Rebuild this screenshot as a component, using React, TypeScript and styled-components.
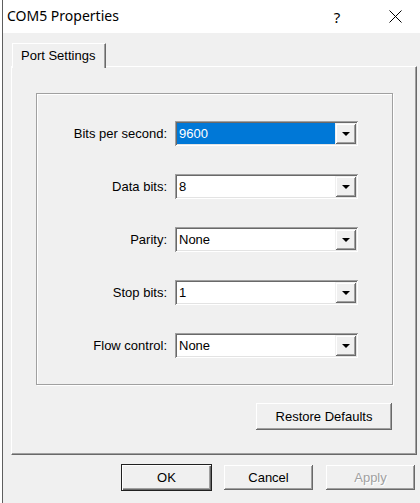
import React from "react";
import styled, { createGlobalStyle } from "styled-components";

const Global = createGlobalStyle`
  html, body { margin: 0; padding: 0; background: #ffffff; }
  body {
    width: 420px;
    height: 503px;
    overflow: hidden;
    font-family: "Liberation Sans", Arial, sans-serif;
    font-size: 13px;
    color: #000;
  }
  #root { width: 420px; height: 503px; }
`;

const Window = styled.div`
  margin-left: 2px;
  width: 417px;
  height: 503px;
  border-left: 1px solid #5e5e5e;
  display: flex;
  flex-direction: column;
  background: #f0f0f0;
  overflow: hidden;
`;

const TitleBar = styled.div`
  height: 33px;
  flex: none;
  background: #ffffff;
  display: flex;
  align-items: center;
  padding-left: 4px;
`;

const Title = styled.div`
  flex: 1;
  font-family: "Noto Sans", "Open Sans", sans-serif;
  font-size: 14px;
  color: #000;
  padding-bottom: 2px;
`;

const CaptionButton = styled.div<{ $w: number }>`
  width: ${(p) => p.$w}px;
  height: 33px;
  display: flex;
  align-items: center;
  justify-content: center;
  font-family: "Noto Sans", sans-serif;
  font-size: 15px;
  color: #000;
`;

const Body = styled.div`
  flex: 1;
  display: flex;
  flex-direction: column;
  padding: 10px 3px 0 8px;
`;

const TabStrip = styled.div`
  display: flex;
  height: 24px;
  position: relative;
  z-index: 1;
  margin-bottom: -1px;
`;

const Tab = styled.div`
  margin-left: 1px;
  height: 25px;
  box-sizing: border-box;
  padding: 4px 10px 0 8px;
  background: #f0f0f0;
  border-top: 1px solid #ffffff;
  border-left: 1px solid #ffffff;
  border-right: 1px solid #696969;
  box-shadow: inset -1px 0 #a0a0a0;
  font-size: 13px;
  white-space: nowrap;
`;

const Panel = styled.div`
  display: flex;
  flex-direction: column;
  border-top: 1px solid #ffffff;
  border-left: 1px solid #ffffff;
  border-right: 1px solid #696969;
  border-bottom: 1px solid #696969;
  box-shadow: inset -1px -1px #a0a0a0;
  padding: 26px 23px 23px 24px;
`;

const GroupBox = styled.div`
  height: 292px;
  box-sizing: border-box;
  border: 1px solid #a0a0a0;
  box-shadow: inset 1px 1px #ffffff, 1px 1px #ffffff;
  padding: 27px 34px 0 0;
  display: flex;
  flex-direction: column;
  gap: 28px;
`;

const Row = styled.div`
  display: grid;
  grid-template-columns: 130px 183px;
  column-gap: 8px;
  align-items: center;
  height: 25px;
`;

const Label = styled.div`
  text-align: right;
  white-space: nowrap;
`;

const Combo = styled.div`
  height: 25px;
  box-sizing: border-box;
  padding: 2px;
  display: flex;
  background: #ffffff;
  box-shadow: inset 1px 1px #a0a0a0, inset -1px -1px #ffffff,
    inset 2px 2px #696969, inset -2px -2px #e3e3e3;
`;

const Field = styled.div<{ $selected?: boolean }>`
  flex: 1;
  display: flex;
  align-items: center;
  padding-left: 2px;
  background: ${(p) => (p.$selected ? "#0078d7" : "#ffffff")};
  color: ${(p) => (p.$selected ? "#ffffff" : "#000000")};
`;

const DropButton = styled.div`
  width: 21px;
  display: flex;
  align-items: center;
  justify-content: center;
  background: #f0f0f0;
  box-shadow: inset 1px 1px #f0f0f0, inset -1px -1px #696969,
    inset 2px 2px #ffffff, inset -2px -2px #a0a0a0;
`;

const Arrow = styled.div`
  width: 0;
  height: 0;
  border-left: 4px solid transparent;
  border-right: 4px solid transparent;
  border-top: 4px solid #000;
  margin-left: 1px;
  margin-top: 1px;
`;

const ButtonRow = styled.div<{ $top: number; $right: number }>`
  display: flex;
  justify-content: flex-end;
  gap: 11px;
  margin-top: ${(p) => p.$top}px;
  padding-right: ${(p) => p.$right}px;
`;

const Button = styled.div<{ $w: number; $h: number; $default?: boolean; $disabled?: boolean }>`
  width: ${(p) => p.$w}px;
  height: ${(p) => p.$h}px;
  box-sizing: border-box;
  display: flex;
  align-items: center;
  justify-content: center;
  background: #f0f0f0;
  border: 1px solid ${(p) => (p.$default ? "#202020" : "transparent")};
  box-shadow: ${(p) =>
    p.$default
      ? "inset 1px 1px #ffffff, inset -1px -1px #696969, inset -2px -2px #a0a0a0"
      : "inset 0 0 0 0 transparent, inset -1px -1px #696969, inset 1px 1px #ffffff, inset -2px -2px #a0a0a0"};
  color: ${(p) => (p.$disabled ? "#a0a0a0" : "#000")};
  text-shadow: ${(p) => (p.$disabled ? "1px 1px #ffffff" : "none")};
  font-size: 13px;
  white-space: nowrap;
`;

const fields: { label: string; value: string; selected?: boolean }[] = [
  { label: "Bits per second:", value: "9600", selected: true },
  { label: "Data bits:", value: "8" },
  { label: "Parity:", value: "None" },
  { label: "Stop bits:", value: "1" },
  { label: "Flow control:", value: "None" },
];

export default function App() {
  return (
    <>
      <Global />
      <Window>
        <TitleBar>
          <Title>COM5 Properties</Title>
          <CaptionButton $w={66}>?</CaptionButton>
          <CaptionButton $w={50}>
            <svg width="13" height="13" viewBox="0 0 13 13">
              <path d="M0.5 0.5 L12.5 12.5 M12.5 0.5 L0.5 12.5" stroke="#000" strokeWidth="1" fill="none" />
            </svg>
          </CaptionButton>
        </TitleBar>
        <Body>
          <TabStrip>
            <Tab>Port Settings</Tab>
          </TabStrip>
          <Panel>
            <GroupBox>
              {fields.map((f) => (
                <Row key={f.label}>
                  <Label>{f.label}</Label>
                  <Combo>
                    <Field $selected={f.selected}>{f.value}</Field>
                    <DropButton>
                      <Arrow />
                    </DropButton>
                  </Combo>
                </Row>
              ))}
            </GroupBox>
            <ButtonRow $top={17} $right={0}>
              <Button $w={138} $h={29}>Restore Defaults</Button>
            </ButtonRow>
          </Panel>
          <ButtonRow $top={9} $right={1}>
            <Button $w={91} $h={27} $default>OK</Button>
            <Button $w={91} $h={27}>Cancel</Button>
            <Button $w={91} $h={27} $disabled>Apply</Button>
          </ButtonRow>
        </Body>
      </Window>
    </>
  );
}
